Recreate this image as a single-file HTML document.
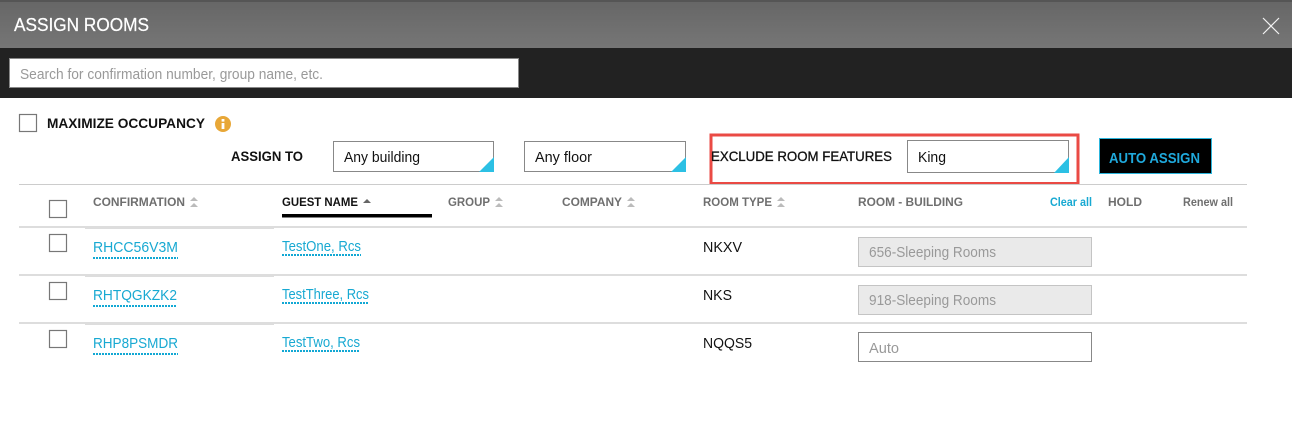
<!DOCTYPE html>
<html><head><meta charset="utf-8"><title>Assign Rooms</title>
<style>
html,body{margin:0;padding:0;background:#fff;width:1292px;height:443px;overflow:hidden}
svg{display:block}
text{font-family:"Liberation Sans",sans-serif;font-size:13px}
.h{font-size:12px;font-weight:bold;fill:#6f6f6f}
.l{font-size:15px;fill:#18a9d2}
.k{font-size:15px;fill:#111}
.g{font-size:15px;fill:#999}
.b{font-size:14px;font-weight:bold;fill:#111}
</style></head><body>
<svg width="1292" height="443" viewBox="0 0 1292 443" xmlns="http://www.w3.org/2000/svg">
<defs><linearGradient id="t" x1="0" y1="0" x2="0" y2="1"><stop offset="0" stop-color="#666"/><stop offset="1" stop-color="#767676"/></linearGradient></defs>
<rect width="1292" height="443" fill="#fff"/>
<rect width="1292" height="48" fill="url(#t)"/>
<rect width="1292" height="2" fill="#555"/>
<text x="14" y="31" style="font-size:18px;stroke:#fff;stroke-width:.25" fill="#fff" textLength="135" lengthAdjust="spacingAndGlyphs">ASSIGN ROOMS</text>
<path d="M1263 18L1279 34M1279 18L1263 34" stroke="#f2f2f2" stroke-width="1.2" fill="none"/>
<rect y="48" width="1292" height="50" fill="#222"/>
<rect x="9.5" y="58.5" width="509" height="29" fill="#fff" stroke="#888"/>
<text x="20" y="79" class="g" textLength="303" lengthAdjust="spacingAndGlyphs">Search for confirmation number, group name, etc.</text>

<rect x="19.5" y="114.5" width="17" height="17" fill="#fff" stroke="#777" stroke-width="1.2"/>
<text x="47" y="128" class="b" textLength="158" lengthAdjust="spacingAndGlyphs">MAXIMIZE OCCUPANCY</text>
<circle cx="223" cy="124" r="8" fill="#e8a737"/>
<rect x="221.6" y="123" width="2.8" height="6" fill="#fff"/><rect x="221.6" y="119" width="2.8" height="2.6" fill="#fff"/>

<text x="231" y="161" class="b" textLength="72" lengthAdjust="spacingAndGlyphs">ASSIGN TO</text>
<rect x="333.5" y="141.5" width="160" height="30" fill="#fff" stroke="#888"/>
<path d="M494 157V172H479Z" fill="#2cc0e4"/>
<text x="344" y="162" class="k" textLength="76" lengthAdjust="spacingAndGlyphs">Any building</text>
<rect x="524.5" y="141.5" width="161" height="30" fill="#fff" stroke="#888"/>
<path d="M686 157V172H671Z" fill="#2cc0e4"/>
<text x="535" y="162" class="k" textLength="57" lengthAdjust="spacingAndGlyphs">Any floor</text>

<rect x="711" y="135" width="367" height="48.5" fill="none" stroke="#ea4a44" stroke-width="3"/>
<text x="711" y="161" class="b" style="font-weight:normal;stroke:#111;stroke-width:.3" textLength="181" lengthAdjust="spacingAndGlyphs">EXCLUDE ROOM FEATURES</text>
<rect x="907.5" y="140.5" width="161" height="32" fill="#fff" stroke="#888"/>
<path d="M1069 157V173H1054Z" fill="#2cc0e4"/>
<text x="918" y="162" class="k" textLength="28" lengthAdjust="spacingAndGlyphs">King</text>
<rect x="1099.5" y="138.5" width="112" height="35" fill="#000" stroke="#2cb5dc"/>
<text x="1109" y="163" style="font-size:15px;font-weight:bold" fill="#1fa9dc" textLength="91" lengthAdjust="spacingAndGlyphs">AUTO ASSIGN</text>

<rect x="19" y="184" width="1228" height="1" fill="#ccc"/>
<rect x="49.5" y="200.5" width="17" height="17" fill="#fff" stroke="#777" stroke-width="1.2"/>
<text x="93" y="206" class="h" textLength="92" lengthAdjust="spacingAndGlyphs">CONFIRMATION</text>
<path d="M194 197l4 4h-8zM194 203l4 4h-8z" fill="#bbb"/>
<text x="282" y="206" class="h" style="fill:#111" textLength="76" lengthAdjust="spacingAndGlyphs">GUEST NAME</text>
<path d="M367 199l4 4h-8z" fill="#666"/>
<rect x="282" y="214" width="150" height="3.5" fill="#000"/>
<text x="448" y="206" class="h" textLength="42" lengthAdjust="spacingAndGlyphs">GROUP</text>
<path d="M499 197l4 4h-8zM499 203l4 4h-8z" fill="#bbb"/>
<text x="562" y="206" class="h" textLength="60" lengthAdjust="spacingAndGlyphs">COMPANY</text>
<path d="M631 197l4 4h-8zM631 203l4 4h-8z" fill="#bbb"/>
<text x="703" y="206" class="h" textLength="69" lengthAdjust="spacingAndGlyphs">ROOM TYPE</text>
<path d="M781 197l4 4h-8zM781 203l4 4h-8z" fill="#bbb"/>
<text x="858" y="206" class="h" textLength="105" lengthAdjust="spacingAndGlyphs">ROOM - BUILDING</text>
<text x="1050" y="206" class="h" style="fill:#18a9d2" textLength="42" lengthAdjust="spacingAndGlyphs">Clear all</text>
<text x="1108" y="206" class="h" textLength="34" lengthAdjust="spacingAndGlyphs">HOLD</text>
<text x="1183" y="206" class="h" textLength="50" lengthAdjust="spacingAndGlyphs">Renew all</text>

<!-- row 1 -->
<rect x="19" y="226" width="1228" height="2" fill="#ddd"/><rect x="85" y="226" width="189" height="3" fill="#ddd"/>
<rect x="49.5" y="234.5" width="17" height="17" fill="#fff" stroke="#777" stroke-width="1.2"/>
<text x="93" y="252" class="l" textLength="85" lengthAdjust="spacingAndGlyphs">RHCC56V3M</text>
<path d="M93 258H178" stroke="#12a8d4" stroke-width="2" stroke-dasharray="2 1" fill="none"/>
<text x="282" y="251" class="l" textLength="79" lengthAdjust="spacingAndGlyphs">TestOne, Rcs</text>
<path d="M282 255H361" stroke="#12a8d4" stroke-width="2" stroke-dasharray="2 1" fill="none"/>
<text x="703" y="252" class="k" textLength="39" lengthAdjust="spacingAndGlyphs">NKXV</text>
<rect x="858.5" y="237.5" width="233" height="29" fill="#eaeaea" stroke="#c4c4c4"/>
<text x="869" y="257" class="g" textLength="127" lengthAdjust="spacingAndGlyphs">656-Sleeping Rooms</text>

<!-- row 2 -->
<rect x="19" y="274" width="1228" height="2" fill="#ddd"/><rect x="85" y="274" width="189" height="3" fill="#ddd"/>
<rect x="49.5" y="282.5" width="17" height="17" fill="#fff" stroke="#777" stroke-width="1.2"/>
<text x="93" y="300" class="l" textLength="84" lengthAdjust="spacingAndGlyphs">RHTQGKZK2</text>
<path d="M93 306H177" stroke="#12a8d4" stroke-width="2" stroke-dasharray="2 1" fill="none"/>
<text x="282" y="299" class="l" textLength="87" lengthAdjust="spacingAndGlyphs">TestThree, Rcs</text>
<path d="M282 303H369" stroke="#12a8d4" stroke-width="2" stroke-dasharray="2 1" fill="none"/>
<text x="703" y="300" class="k" textLength="29" lengthAdjust="spacingAndGlyphs">NKS</text>
<rect x="858.5" y="285.5" width="233" height="29" fill="#eaeaea" stroke="#c4c4c4"/>
<text x="869" y="305" class="g" textLength="127" lengthAdjust="spacingAndGlyphs">918-Sleeping Rooms</text>

<!-- row 3 -->
<rect x="19" y="322" width="1228" height="2" fill="#ddd"/><rect x="85" y="322" width="189" height="3" fill="#ddd"/>
<rect x="49.5" y="330.5" width="17" height="17" fill="#fff" stroke="#777" stroke-width="1.2"/>
<text x="93" y="348" class="l" textLength="85" lengthAdjust="spacingAndGlyphs">RHP8PSMDR</text>
<path d="M93 354H178" stroke="#12a8d4" stroke-width="2" stroke-dasharray="2 1" fill="none"/>
<text x="282" y="347" class="l" textLength="78" lengthAdjust="spacingAndGlyphs">TestTwo, Rcs</text>
<path d="M282 351H360" stroke="#12a8d4" stroke-width="2" stroke-dasharray="2 1" fill="none"/>
<text x="703" y="348" class="k" textLength="49" lengthAdjust="spacingAndGlyphs">NQQS5</text>
<rect x="858.5" y="332.5" width="233" height="29" fill="#fff" stroke="#888"/>
<text x="869" y="353" class="g" textLength="30" lengthAdjust="spacingAndGlyphs">Auto</text>
</svg>
</body></html>
